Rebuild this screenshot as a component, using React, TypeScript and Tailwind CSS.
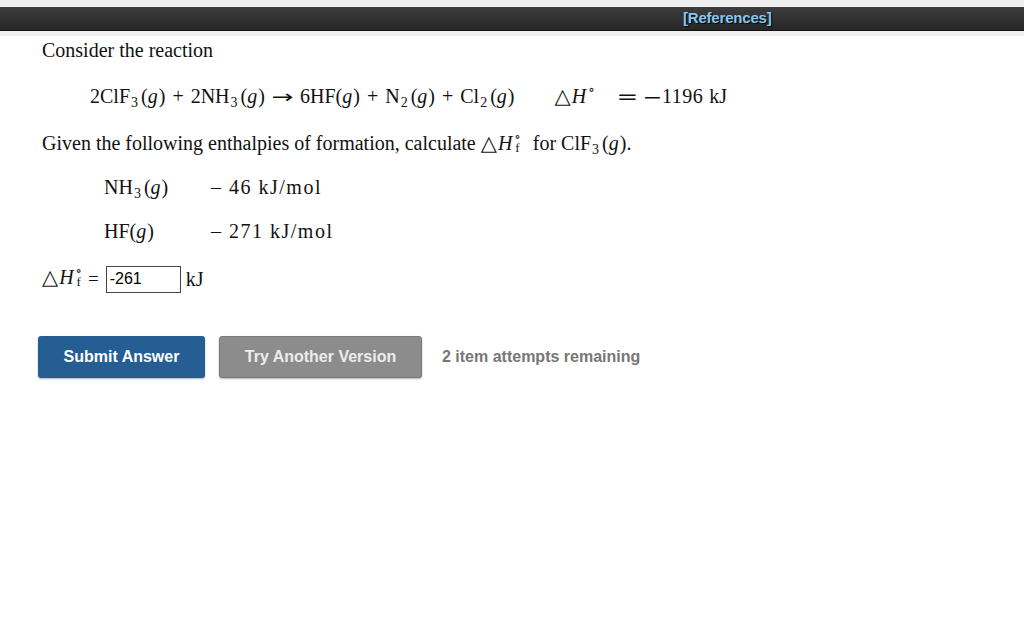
import React from "react"

const serif = { fontFamily: '"Liberation Serif", "DejaVu Serif", serif' }
const sans = { fontFamily: '"Liberation Sans", Arial, sans-serif' }
const dejavu = { fontFamily: '"DejaVu Sans", sans-serif' }

function Sub({ children }: { children: React.ReactNode }) {
  return <span className="text-[14px] leading-none relative top-[4px] ml-[1px] mr-[3px]">{children}</span>
}

function Gas() {
  return (
    <span>
      (<i className="pr-[1px]">g</i>)
    </span>
  )
}

function Op({ children }: { children: React.ReactNode }) {
  return <span className="mx-[7px]">{children}</span>
}

// △H with ° above and f below
function DeltaHf() {
  return (
    <span className="inline-flex items-baseline">
      <span className="text-[21px] leading-none">△</span>
      <i className="ml-[1px]">H</i>
      <span className="relative -top-[9px] ml-[2px] mr-[6px] inline-flex flex-col items-start text-[13px] leading-[11px]">
        <span>∘</span>
        <span className="ml-[1px]">f</span>
      </span>
    </span>
  )
}

export default function App() {
  return (
    <div className="w-[1024px] h-[640px] bg-white overflow-hidden">
      {/* top bar */}
      <div className="h-[7px] bg-[#efefef]" />
      <div className="h-[24px] bg-gradient-to-b from-[#3d3d3d] to-[#262626] border-b border-[#111] flex items-center">
        <span
          className="ml-[683px] text-[15px] font-bold text-[#84c8f0] tracking-[-0.2px] [text-shadow:1px_1px_1px_#000]"
          style={sans}
        >
          [References]
        </span>
      </div>
      <div className="h-[5px] bg-[#efefef]" />

      <div className="pl-[42px] text-[#111] text-[20px]" style={serif}>
        <p className="leading-[28px]">Consider the reaction</p>

        {/* reaction */}
        <div className="mt-[18px] ml-[48px] leading-[28px] flex items-baseline whitespace-nowrap">
          <span>
            2ClF<Sub>3</Sub>
          </span>
          <Gas />
          <Op>+</Op>
          <span>
            2NH<Sub>3</Sub>
          </span>
          <Gas />
          <span className="mx-[10px] inline-block scale-x-[1.45] text-[18px] leading-none" style={dejavu}>
            →
          </span>
          <span>6HF</span>
          <Gas />
          <Op>+</Op>
          <span>
            N<Sub>2</Sub>
          </span>
          <Gas />
          <Op>+</Op>
          <span>
            Cl<Sub>2</Sub>
          </span>
          <Gas />
          <span className="ml-[40px] text-[21px] leading-none">△</span>
          <i className="ml-[1px]">H</i>
          <span className="text-[14px] leading-none relative -top-[9px] ml-[2px]">∘</span>
          <span className="ml-[24px] mr-[9px] inline-block scale-x-[1.3] text-[20px] leading-none" style={dejavu}>
            =
          </span>
          <span className="inline-block scale-x-[1.4] text-[17px] leading-none" style={dejavu}>
            −
          </span>
          <span className="ml-[3px] tracking-[0.5px]">1196</span>
          <span className="ml-[6px]">kJ</span>
        </div>

        <p className="mt-[19px] leading-[28px] flex items-baseline whitespace-nowrap">
          <span>Given the following enthalpies of formation, calculate&nbsp;</span>
          <DeltaHf />
          <span className="ml-[6px]">for ClF</span>
          <Sub>3</Sub>
          <Gas />
          <span>.</span>
        </p>

        <div className="mt-[11px] ml-[62px] grid grid-cols-[107px_auto] gap-y-[16px] leading-[28px] whitespace-nowrap">
          <span className="flex items-baseline">
            NH<Sub>3</Sub>
            <Gas />
          </span>
          <span className="tracking-[1.5px]">– 46 kJ/mol</span>
          <span className="flex items-baseline">
            HF
            <Gas />
          </span>
          <span className="tracking-[1.5px]">– 271 kJ/mol</span>
        </div>

        <div className="mt-[17px] flex items-center">
          <DeltaHf />
          <span className="text-[19px]">=</span>
          <div
            className="ml-[7px] w-[75px] h-[27px] border border-[#444] flex items-center pl-[3px] text-[16px] text-black"
            style={sans}
          >
            -261
          </div>
          <span className="ml-[5px]">kJ</span>
        </div>
      </div>

      <div className="mt-[40px] ml-[38px] flex items-center" style={sans}>
        <button className="w-[167px] h-[42px] rounded-[3px] bg-[#245e93] text-white text-[16px] font-bold shadow-[0_1px_2px_rgba(0,0,0,0.3)]">
          Submit Answer
        </button>
        <button className="ml-[14px] w-[203px] h-[42px] rounded-[3px] bg-[#8c8c8c] border border-[#7a7a7a] text-[#ececec] text-[16px] font-bold shadow-[0_1px_2px_rgba(0,0,0,0.3)]">
          Try Another Version
        </button>
        <span className="ml-[20px] text-[16px] font-bold text-[#777]">2 item attempts remaining</span>
      </div>
    </div>
  )
}
